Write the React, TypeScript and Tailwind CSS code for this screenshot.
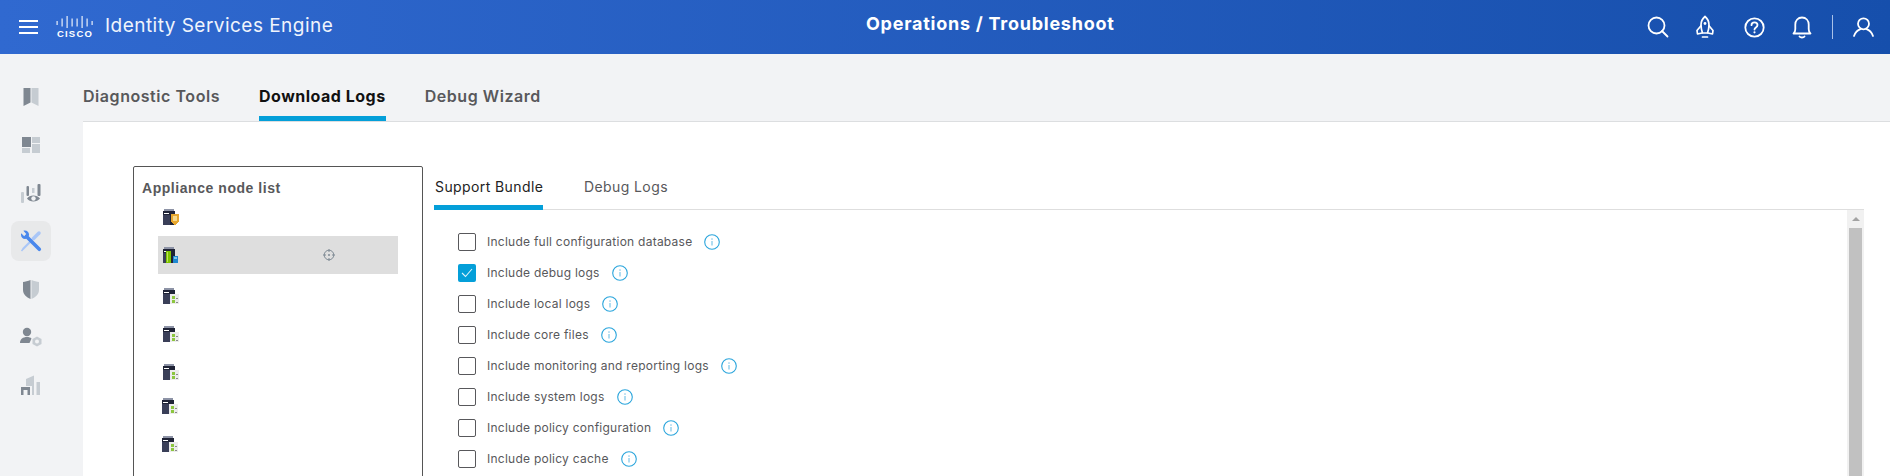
import React from "react";

const Bookmark = () => (
  <svg width="20" height="20" viewBox="0 0 20 20">
    <path d="M2.500 1h7v14.500L2.500 19z" fill="#7f8791" />
    <path d="M10.500 1h7v18l-7-3.500z" fill="#c6ccd2" />
  </svg>
);
const Dash = () => (
  <svg width="20" height="18" viewBox="0 0 20 18">
    <rect x="1" y="1" width="9" height="10" fill="#7f8791" />
    <rect x="11" y="1" width="8" height="6" fill="#c6ccd2" />
    <rect x="1" y="12" width="8" height="5" fill="#c6ccd2" />
    <rect x="11" y="8" width="8" height="9" fill="#c6ccd2" />
  </svg>
);
const EyeBars = () => (
  <svg width="20" height="19" viewBox="0 0 20 19">
    <rect x="0" y="8" width="3" height="11" rx="1" fill="#c6ccd2" />
    <rect x="5.500" y="2" width="2.500" height="10" rx="1" fill="#7f8791" />
    <rect x="11" y="4" width="2.500" height="5" fill="#c6ccd2" />
    <rect x="16.500" y="0" width="3" height="12" rx="1" fill="#7f8791" />
    <path d="M6 14.500c2.500-4 10-4 13 0-3 4-10.500 4-13 0z" fill="#7f8791" />
    <circle cx="12.500" cy="14.500" r="2.200" fill="#f2f3f5" />
  </svg>
);
const Tools = () => (
  <svg width="22" height="22" viewBox="0 0 22 22" fill="none">
    <path d="M13.500 8.500 19 3" stroke="#a9c6f7" strokeWidth="3.500" strokeLinecap="round" />
    <path d="M10 12 3 19" stroke="#a9c6f7" strokeWidth="2.200" />
    <path d="M1.500 21 3.500 18.500" stroke="#a9c6f7" strokeWidth="1.500" />
    <path d="M6.500 6.500 19.300 19.300" stroke="#4a88ec" strokeWidth="3.600" strokeLinecap="round" />
    <path d="M1.200 3.300 4.200 6.200 6.300 4.100 3.400.800C6.500-.2 9.500 2 9 5.500L5.500 9C2.500 9.300.300 6.500 1.200 3.300z" fill="#4a88ec" />
  </svg>
);
const Shield = () => (
  <svg width="18" height="21" viewBox="0 0 18 21">
    <path d="M8.500 1C6 2 3 2.800 1 3v8c0 4 3.500 7.500 7.500 9z" fill="#7f8791" />
    <path d="M9.500 1c2.500 1 5.500 1.800 7.500 2v8c0 4-3.500 7.500-7.500 9z" fill="#c6ccd2" />
  </svg>
);
const UserGear = () => (
  <svg width="24" height="20" viewBox="0 0 24 20">
    <circle cx="8" cy="5" r="4.200" fill="#7f8791" />
    <path d="M1 16c0-4 3-6 7-6 2 0 3.500.5 4.500 1.500L10.500 16z" fill="#7f8791" />
    <path d="M18 9.500l4.500 2.500v5L18 19.500 13.500 17v-5z" fill="#c6ccd2" />
    <circle cx="18" cy="14.500" r="2" fill="#f2f3f5" />
  </svg>
);
const Building = () => (
  <svg width="22" height="20" viewBox="0 0 22 20">
    <path d="M6 4 14 .5V20h-2v-9H6z" fill="#c6ccd2" />
    <rect x="16.500" y="7" width="3.500" height="13" fill="#c6ccd2" />
    <path d="M1 20v-8h9v8H7.500v-5h-4v5z" fill="#7f8791" />
  </svg>
);

const Info = () => (
  <svg width="16" height="16" viewBox="0 0 16 16" className="shrink-0">
    <circle cx="8" cy="8" r="7.300" fill="none" stroke="#2aa5dc" strokeWidth="1.100" />
    <rect x="7.300" y="7" width="1.400" height="4.500" fill="#8fcdec" />
    <rect x="7.300" y="4.300" width="1.400" height="1.500" fill="#8fcdec" />
  </svg>
);

const ServerBase = ({ children }: { children?: React.ReactNode }) => (
  <svg width="16" height="16" viewBox="0 0 16 16" shapeRendering="crispEdges" className="shrink-0">
    <rect x="1" y="0" width="10" height="2" fill="#8d93a6" />
    <rect x="0" y="2" width="12" height="14" fill="#1f2336" />
    <rect x="0" y="6" width="7" height="10" fill="#3a3f58" />
    <rect x="1" y="4" width="5" height="1" fill="#ffffff" />
    {children}
  </svg>
);
const Policy = () => (
  <ServerBase>
    <rect x="7" y="6" width="9" height="10" fill="#ececec" />
    <rect x="9" y="8" width="3" height="3" fill="#8cc63f" />
    <rect x="9" y="12" width="3" height="3" fill="#8cc63f" />
    <rect x="13" y="10" width="2" height="1" fill="#8a8a8a" />
    <rect x="13" y="14" width="2" height="1" fill="#8a8a8a" />
  </ServerBase>
);
const Guard = () => (
  <ServerBase>
    <path d="M8 5h7l1 1v6l-2 3-2 1-2-1-2-2z" fill="#e7a72e" />
    <rect x="10" y="7" width="4" height="5" fill="#f7d98a" />
  </ServerBase>
);
const Monitor = () => (
  <ServerBase>
    <rect x="3" y="4" width="5" height="12" fill="#7ec400" />
    <rect x="4" y="5" width="1" height="10" fill="#bde35e" />
    <rect x="10" y="9" width="5" height="7" fill="#1e88d0" />
    <rect x="11" y="10" width="3" height="2" fill="#7fc6f0" />
  </ServerBase>
);

const options = [
  "Include full configuration database",
  "Include debug logs",
  "Include local logs",
  "Include core files",
  "Include monitoring and reporting logs",
  "Include system logs",
  "Include policy configuration",
  "Include policy cache",
];

const nodeRows = [
  { h: "h-[32px]", el: <Guard />, cls: "" },
  { h: "h-[38px]", el: <Monitor />, cls: "bg-[#dedede] mt-[3px]" },
  { h: "h-[38px]", el: <Policy />, cls: "mt-[3px]" },
  { h: "h-[38px]", el: <Policy />, cls: "" },
  { h: "h-[38px]", el: <Policy />, cls: "" },
  { h: "h-[30px]", el: <Policy />, cls: "-ml-px" },
  { h: "h-[46px]", el: <Policy />, cls: "-ml-px" },
];

export default function App() {
  return (
    <div className="h-[476px] w-[1890px] overflow-hidden flex flex-col bg-[#f2f3f5] font-['Inter',sans-serif]">
      <header className="h-[54px] shrink-0 flex items-center bg-gradient-to-r from-[#3069d0] to-[#164fac] text-white relative">
        <svg width="20" height="16" viewBox="0 0 20 16" className="ml-[19px]">
          <rect x="0" y="1" width="19" height="2" fill="#fff" />
          <rect x="0" y="7" width="19" height="2" fill="#fff" />
          <rect x="0" y="13" width="19" height="2" fill="#fff" />
        </svg>
        <div className="ml-[17px] w-[38px] flex flex-col items-center">
          <svg width="38" height="12" viewBox="0 0 38 12">
            {[[1,9],[6,6],[11,2],[16,6],[21,6],[26,2],[31,6],[36,9]].map(([x, y], i) => (
              <rect key={i} x={x - 0.5} y={y === 2 ? 0 : y === 6 ? 2.500 : 5} width="1.200" height={y === 2 ? 12 : y === 6 ? 8 : 4} fill="#fff" opacity="0.9" />
            ))}
          </svg>
          <span className="text-[9.500px] leading-[10px] mt-px font-bold tracking-[1.200px] font-['Liberation_Sans',sans-serif]">CISCO</span>
        </div>
        <span className="ml-[11px] -mt-[2px] text-[19px] tracking-[0.470px] text-[#f0f4fc]">Identity Services Engine</span>
        <span className="absolute left-[866px] top-[12px] text-[18px] leading-[24px] font-bold tracking-[0.750px]">Operations / Troubleshoot</span>
        <div className="ml-auto flex items-center text-white">
          <svg width="22" height="22" viewBox="0 0 22 22" fill="none" stroke="#fff" strokeWidth="1.800" className="mr-[26px]">
            <circle cx="9.500" cy="9.500" r="8" />
            <path d="M15 15l5.500 5.500" strokeLinecap="round" />
          </svg>
          <svg width="20" height="24" viewBox="0 0 20 24" fill="none" stroke="#fff" strokeWidth="1.700" strokeLinejoin="round" className="mr-[29px]">
            <path d="M10 1.500c3 2.500 4 5.500 4 8.500 0 3-.5 5-1.500 8h-5c-1-3-1.500-5-1.500-8 0-3 1-6 4-8.500z" />
            <circle cx="10" cy="8.500" r="1.400" fill="#fff" stroke="none" />
            <path d="M5.800 11 2 15.500l.5 3.500 4.500-1M14.200 11 18 15.500l-.5 3.500-4.500-1M7.500 22h5" strokeLinecap="round" />
          </svg>
          <svg width="21" height="21" viewBox="0 0 21 21" fill="none" stroke="#fff" strokeWidth="1.800" className="mr-[27px]">
            <circle cx="10.500" cy="10.500" r="9.200" />
            <path d="M7.500 8.200c0-1.800 1.400-2.800 3-2.800s3 1 3 2.600c0 2.400-3 2.400-3 4.500" strokeLinecap="round" />
            <circle cx="10.500" cy="15.300" r="1.100" fill="#fff" stroke="none" />
          </svg>
          <svg width="20" height="23" viewBox="0 0 20 23" fill="none" stroke="#fff" strokeWidth="1.800" strokeLinejoin="round" className="mr-[20px]">
            <path d="M1.500 17.500c1.500-1 1.800-2.500 1.800-4.500V8.500C3.300 4.500 6 1.500 10 1.500s6.700 3 6.700 7V13c0 2 .3 3.500 1.800 4.500z" />
            <path d="M7.500 20.500c1 1.300 4 1.300 5 0" strokeLinecap="round" />
          </svg>
          <div className="w-px h-[24px] bg-[#a9c1e8] mr-[20px]" />
          <svg width="21" height="20" viewBox="0 0 21 20" fill="none" stroke="#fff" strokeWidth="1.800" strokeLinecap="round" className="mr-[16px]">
            <circle cx="10.500" cy="6.800" r="5.500" />
            <path d="M1 19c1.500-4 4-6 6.500-6.800M20 19c-1.500-4-4-6-6.500-6.800" />
          </svg>
        </div>
      </header>

      <div className="flex-1 flex min-h-0">
        <aside className="w-[83px] shrink-0 flex flex-col pt-[23px]">
          {[<Bookmark />, <Dash />, <EyeBars />, <Tools />, <Shield />, <UserGear />, <Building />].map((ic, i) => (
            <div key={i} className={`w-[40px] h-[40px] ml-[11px] mb-[8px] flex items-center justify-center rounded-lg ${i === 3 ? "bg-[#e8e9ea]" : ""}`}>
              {ic}
            </div>
          ))}
        </aside>

        <main className="flex-1 flex flex-col min-w-0">
          <nav className="h-[68px] shrink-0 flex items-start gap-[39px] pt-[30px] border-b border-[#dcdee0] text-[16px] leading-[24px] font-semibold tracking-[0.550px] text-[#58585b]">
            <div>Diagnostic Tools</div>
            <div className="h-[37px] border-b-[5px] border-[#049fd9] text-[#111] font-bold tracking-[0.500px]">Download Logs</div>
            <div>Debug Wizard</div>
          </nav>

          <div className="flex-1 bg-white flex pl-[50px] pt-[44px] min-h-0">
            <section className="w-[290px] h-[400px] shrink-0 border border-[#555] rounded-[2px] pl-[8px] pt-[12px]">
              <h2 className="text-[14px] leading-[18px] font-bold tracking-[0.550px] text-[#58585b] font-['Liberation_Sans',sans-serif]">Appliance node list</h2>
              <ul className="ml-[16px] w-[240px] mt-[4px]">
                {nodeRows.map((r, i) => (
                  <li key={i} className={`flex items-center pl-[5px] relative ${r.h} ${r.cls}`}>
                    {r.el}
                    {i === 1 && (
                      <svg width="12" height="12" viewBox="0 0 12 12" fill="none" className="absolute left-[165px] top-[13px]" stroke="#7e8a94">
                        <circle cx="6" cy="6" r="4.800" />
                        <path d="M6 0v3M6 9v3M0 6h3M9 6h3" />
                        <circle cx="6" cy="6" r="1" fill="#7e8a94" stroke="none" />
                      </svg>
                    )}
                  </li>
                ))}
              </ul>
            </section>

            <section className="flex-1 min-w-0 ml-[11px] mr-[26px] flex flex-col">
              <div className="h-[44px] shrink-0 flex items-start gap-[41px] border-b border-[#dedede] text-[14px] leading-[20px] tracking-[0.400px] text-[#58585b] whitespace-nowrap">
                <div className="h-[44px] w-[109px] pl-px pt-[11px] border-b-[5px] border-[#049fd9] text-[#222]">Support Bundle</div>
                <div className="pt-[11px]">Debug Logs</div>
              </div>
              <div className="flex-1 flex min-h-0">
                <div className="flex-1 pl-[24px] pt-[16px]">
                  {options.map((o, i) => (
                    <label key={o} className="h-[31px] flex items-center">
                      {i === 1 ? (
                        <span className="w-[18px] h-[18px] rounded-[2px] bg-[#049fd9] flex items-center justify-center">
                          <svg width="12" height="10" viewBox="0 0 12 10" fill="none" stroke="#dff3fb" strokeWidth="1.100">
                            <path d="M1 5l3.500 3.500L11 1" />
                          </svg>
                        </span>
                      ) : (
                        <span className="w-[18px] h-[18px] rounded-[2px] border border-[#58585b] bg-white" />
                      )}
                      <span className="ml-[11px] mr-[12px] text-[12px] tracking-[0.250px] text-[#58585b]">{o}</span>
                      <Info />
                    </label>
                  ))}
                </div>
                <div className="w-[17px] shrink-0 bg-[#f1f1f1] flex flex-col items-center">
                  <div className="h-[18px] flex items-center justify-center">
                    <div className="w-0 h-0 border-x-[4px] border-x-transparent border-b-[4px] border-b-[#a3a3a3]" />
                  </div>
                  <div className="flex-1 w-[13px] bg-[#c1c1c1]" />
                </div>
              </div>
            </section>
          </div>
        </main>
      </div>
    </div>
  );
}
